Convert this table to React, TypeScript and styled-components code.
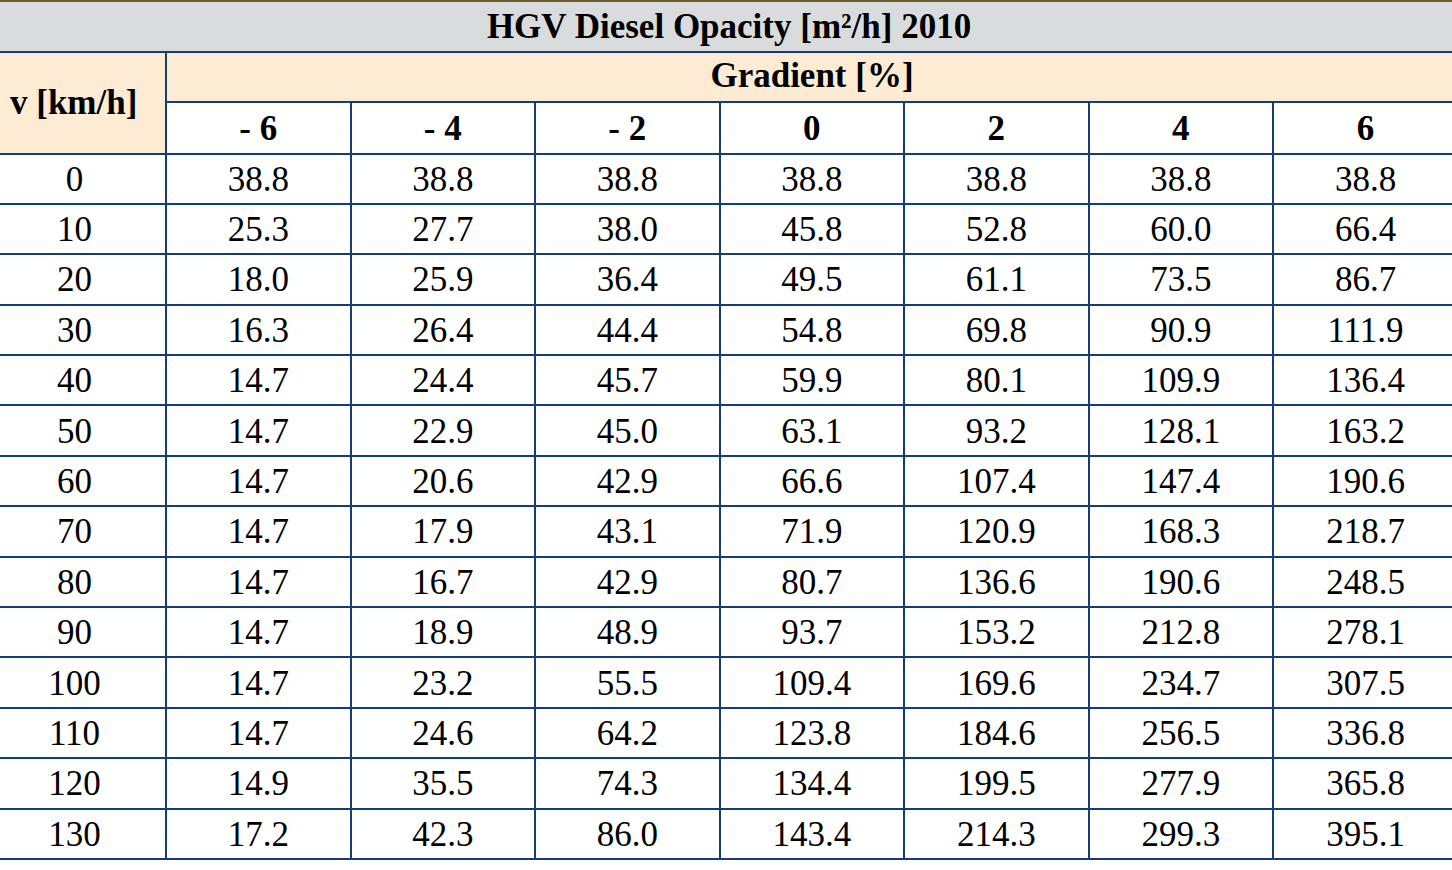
import React from "react";
import styled, { createGlobalStyle } from "styled-components";

const Global = createGlobalStyle`
  html, body { margin: 0; padding: 0; background: #ffffff; }
  body { font-family: "Liberation Serif", "Times New Roman", serif; overflow: hidden; }
`;

const NAVY = "#143d72";

const Table = styled.table`
  border-collapse: collapse;
  table-layout: fixed;
  width: 1458px;
  font-family: "Liberation Serif", "Times New Roman", serif;
  color: #000;
  font-size: 35px;
  line-height: 40px;
`;

const Col = styled.col<{ $w: number }>`
  width: ${(p) => p.$w}px;
`;

const TitleCell = styled.th`
  height: 49px;
  background: #d9dcdd;
  border-top: 2px solid #6b5a2e;
  border-bottom: 2px solid ${NAVY};
  font-weight: bold;
  text-align: center;
  padding: 0;
`;

const CornerCell = styled.th`
  background: #fdebd4;
  border: 2px solid ${NAVY};
  border-left: none;
  text-align: left;
  padding: 0 0 0 10px;
  font-weight: bold;
  white-space: nowrap;
`;

const GroupCell = styled.th`
  height: 46px;
  background: #fdebd4;
  border: 2px solid ${NAVY};
  text-align: center;
  font-weight: bold;
  padding: 0 0 2px 0;
`;

const HeadCell = styled.th`
  height: 47.5px;
  background: #ffffff;
  border: 2px solid ${NAVY};
  text-align: center;
  font-weight: bold;
  padding: 2px 0 0 0;
`;

const Cell = styled.td<{ $first?: boolean }>`
  height: 46.4px;
  border: 2px solid ${NAVY};
  text-align: center;
  padding: 2px 0 0 0;
  ${(p) => (p.$first ? "border-left: none; padding-right: 16px;" : "")}
`;

const headers = ["- 6", "- 4", "- 2", "0", "2", "4", "6"];
const widths = [166, 184.5, 184.5, 184.5, 184.5, 184.5, 184.5, 185];

const rows: [string, string[]][] = [
  ["0", ["38.8", "38.8", "38.8", "38.8", "38.8", "38.8", "38.8"]],
  ["10", ["25.3", "27.7", "38.0", "45.8", "52.8", "60.0", "66.4"]],
  ["20", ["18.0", "25.9", "36.4", "49.5", "61.1", "73.5", "86.7"]],
  ["30", ["16.3", "26.4", "44.4", "54.8", "69.8", "90.9", "111.9"]],
  ["40", ["14.7", "24.4", "45.7", "59.9", "80.1", "109.9", "136.4"]],
  ["50", ["14.7", "22.9", "45.0", "63.1", "93.2", "128.1", "163.2"]],
  ["60", ["14.7", "20.6", "42.9", "66.6", "107.4", "147.4", "190.6"]],
  ["70", ["14.7", "17.9", "43.1", "71.9", "120.9", "168.3", "218.7"]],
  ["80", ["14.7", "16.7", "42.9", "80.7", "136.6", "190.6", "248.5"]],
  ["90", ["14.7", "18.9", "48.9", "93.7", "153.2", "212.8", "278.1"]],
  ["100", ["14.7", "23.2", "55.5", "109.4", "169.6", "234.7", "307.5"]],
  ["110", ["14.7", "24.6", "64.2", "123.8", "184.6", "256.5", "336.8"]],
  ["120", ["14.9", "35.5", "74.3", "134.4", "199.5", "277.9", "365.8"]],
  ["130", ["17.2", "42.3", "86.0", "143.4", "214.3", "299.3", "395.1"]],
];

export default function App() {
  return (
    <>
      <Global />
      <Table>
        <colgroup>
          {widths.map((w, i) => (
            <Col key={i} $w={w} />
          ))}
        </colgroup>
        <thead>
          <tr>
            <TitleCell colSpan={8}>HGV Diesel Opacity [m²/h] 2010</TitleCell>
          </tr>
          <tr>
            <CornerCell rowSpan={2}>v [km/h]</CornerCell>
            <GroupCell colSpan={7}>Gradient [%]</GroupCell>
          </tr>
          <tr>
            {headers.map((h) => (
              <HeadCell key={h}>{h}</HeadCell>
            ))}
          </tr>
        </thead>
        <tbody>
          {rows.map(([v, vals]) => (
            <tr key={v}>
              <Cell $first>{v}</Cell>
              {vals.map((x, i) => (
                <Cell key={i}>{x}</Cell>
              ))}
            </tr>
          ))}
        </tbody>
      </Table>
    </>
  );
}
